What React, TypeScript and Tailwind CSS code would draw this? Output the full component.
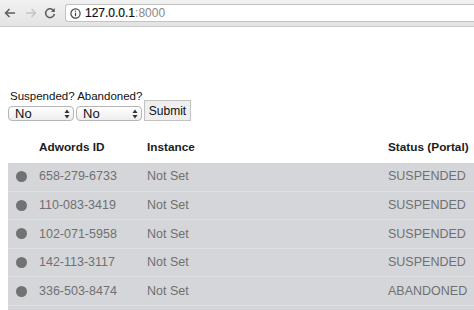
import React from "react";

const rows = [
  { id: "658-279-6733", inst: "Not Set", status: "SUSPENDED" },
  { id: "110-083-3419", inst: "Not Set", status: "SUSPENDED" },
  { id: "102-071-5958", inst: "Not Set", status: "SUSPENDED" },
  { id: "142-113-3117", inst: "Not Set", status: "SUSPENDED" },
  { id: "336-503-8474", inst: "Not Set", status: "ABANDONED" },
];

function Arrows() {
  return (
    <svg width="6" height="10" viewBox="0 0 6 10" className="shrink-0">
      <path d="M3 0.5 L5.5 4 H0.5 Z" fill="#333" />
      <path d="M3 9.5 L5.5 6 H0.5 Z" fill="#333" />
    </svg>
  );
}

function Select() {
  return (
    <div className="flex h-[15px] w-[66px] items-center justify-between rounded-[4px] border border-[#b5b5b5] bg-gradient-to-b from-[#ffffff] to-[#ededed] pl-[6px] pr-[3px] text-[13px] leading-none text-[#111]">
      <span>No</span>
      <Arrows />
    </div>
  );
}

export default function App() {
  return (
    <div
      className="flex h-[310px] w-[474px] flex-col overflow-hidden bg-white"
      style={{ fontFamily: '"Liberation Sans", Arial, sans-serif' }}
    >
      {/* browser toolbar */}
      <div className="flex h-[27px] shrink-0 items-start border-b border-[#c9c9c9] bg-gradient-to-b from-[#f1f1f1] to-[#e4e4e4] pt-[4px]">
        <div className="flex h-[18px] w-[65px] shrink-0 items-center">
          <svg width="12" height="12" viewBox="0 0 12 12" className="ml-[4px]">
            <path d="M11 6 H1.5 M5.5 2 L1.5 6 L5.5 10" stroke="#5e5e5e" strokeWidth="1.5" fill="none" />
          </svg>
          <svg width="12" height="12" viewBox="0 0 12 12" className="ml-[9px]">
            <path d="M1 6 H10.5 M6.5 2 L10.5 6 L6.5 10" stroke="#c4c4c4" strokeWidth="1.4" fill="none" />
          </svg>
          <svg width="12" height="12" viewBox="0 0 12 12" className="ml-[7px]">
            <path d="M10 4.2 A4.4 4.4 0 1 0 10.4 7" stroke="#5e5e5e" strokeWidth="1.5" fill="none" />
            <path d="M10.8 1 V5 H6.8 Z" fill="#5e5e5e" />
          </svg>
        </div>
        <div className="flex h-[18px] flex-1 items-center rounded-l-[3px] border border-r-0 border-[#c3c3c3] bg-white pl-[4px]">
          <svg width="11" height="11" viewBox="0 0 11 11">
            <circle cx="5.5" cy="5.5" r="4.6" stroke="#444" strokeWidth="1.2" fill="none" />
            <rect x="4.9" y="4.6" width="1.2" height="3.6" fill="#444" />
            <rect x="4.9" y="2.6" width="1.2" height="1.2" fill="#444" />
          </svg>
          <span className="ml-[4px] text-[12px] leading-none text-[#111]">
            <span className="font-medium" style={{ WebkitTextStroke: "0.2px #111" }}>127.0.0.1</span>
            <span className="text-[#888]">:8000</span>
          </span>
        </div>
      </div>

      {/* form */}
      <div className="mt-[63px] pl-[10px] text-[11.5px] leading-[12px] text-[#111]">
        Suspended? Abandoned?
      </div>
      <div className="-mt-[2px] flex items-end gap-[2px] pl-[8px]">
        <Select />
        <Select />
        <div className="flex h-[21px] w-[47px] items-center justify-center border border-[#c2c2c2] bg-[#efefef] text-[12px] leading-none text-[#111]">
          Submit
        </div>
      </div>

      {/* table */}
      <div className="ml-[8px] mt-[12px] flex flex-col">
        <div className="flex h-[30px] items-center text-[11.8px] font-bold text-[#1c1c1c]">
          <div className="w-[31px] shrink-0" />
          <div className="w-[108px] shrink-0">Adwords ID</div>
          <div className="flex-1">Instance</div>
          <div className="w-[86px] shrink-0">Status (Portal)</div>
        </div>
        <div className="flex flex-col bg-[#d5d6d9]">
          {rows.map((r) => (
            <div
              key={r.id}
              className="flex h-[28.6px] items-center border-b border-[#dfe0e2] text-[12.5px] text-[#707072]"
            >
              <div className="flex w-[31px] shrink-0 items-center pl-[8px]">
                <div className="h-[11px] w-[11px] rounded-full bg-[#727274]" />
              </div>
              <div className="w-[108px] shrink-0">{r.id}</div>
              <div className="flex-1">{r.inst}</div>
              <div className="w-[86px] shrink-0">{r.status}</div>
            </div>
          ))}
          <div className="h-[20px]" />
        </div>
      </div>
    </div>
  );
}
